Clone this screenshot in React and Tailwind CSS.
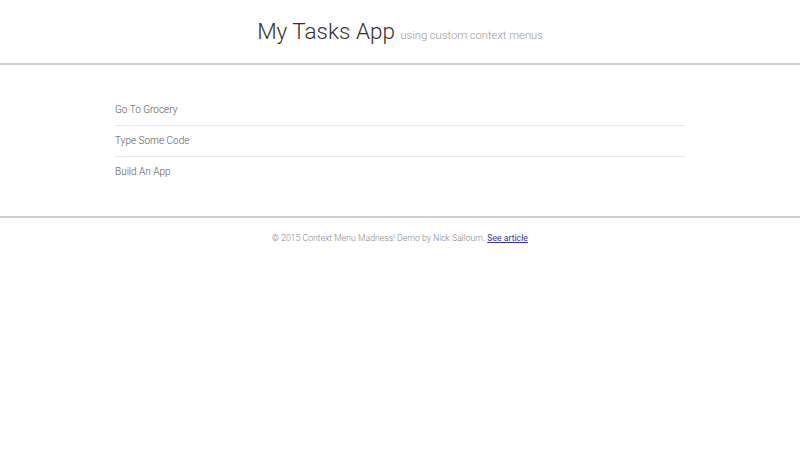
import React from 'react';

const tasks = ['Go To Grocery', 'Type Some Code', 'Build An App'];

export default function App() {
    return (
        <div className="min-h-[450px] bg-white text-[#444]" style={{ fontFamily: 'Roboto, "Noto Sans", sans-serif' }}>
            <header className="h-[65px] border-b-2 border-[#d0d0d0] flex items-center justify-center">
                <h1 className="font-light text-[22.5px] text-[#333] leading-none mt-[-1px]">
                    My Tasks App{' '}
                    <span className="text-[11.2px] text-[#999]">using custom context menus</span>
                </h1>
            </header>
            <main className="pt-[30px] pb-[28px]">
                <ul className="w-[570px] mx-auto">
                    {tasks.map((task, i) => (
                        <li
                            key={task}
                            className={
                                'h-[31px] pb-[2px] flex items-center font-light text-[10px] text-[#555] ' +
                                (i < tasks.length - 1 ? 'border-b border-[#e6e6e6]' : '')
                            }
                        >
                            {task}
                        </li>
                    ))}
                </ul>
            </main>
            <footer className="border-t-2 border-[#d0d0d0] pt-[14px] text-center font-light text-[8.7px] text-[#888]">
                © 2015 Context Menu Madness! Demo by Nick Salloum.{' '}
                <a href="#" className="text-[#3535a0] underline font-normal">See article</a>
            </footer>
        </div>
    );
}
